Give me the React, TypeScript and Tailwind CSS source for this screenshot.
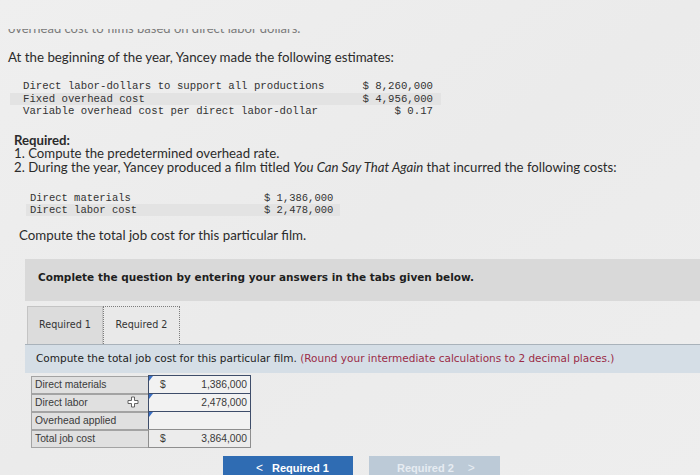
import React from "react";

const sans = { fontFamily: "Lato, 'Open Sans', sans-serif" };
const mono = { fontFamily: "'Liberation Mono', 'DejaVu Sans Mono', monospace" };
const tah = { fontFamily: "'DejaVu Sans', Verdana, sans-serif" };
const arial = { fontFamily: "'Liberation Sans', Arial, sans-serif" };

function PlusCursor() {
  return (
    <svg width="12" height="12" viewBox="0 0 12 12" className="absolute left-[127px] top-[396px]">
      <path d="M4.5 1 H7.5 V4.5 H11 V7.5 H7.5 V11 H4.5 V7.5 H1 V4.5 H4.5 Z" fill="#ffffff" stroke="#555" strokeWidth="0.9" />
    </svg>
  );
}

function Marker() {
  return <span className="absolute left-0 top-0 w-0 h-0 border-t-[5px] border-t-[#3a6fc4] border-r-[4px] border-r-transparent" />;
}

export default function App() {
  return (
    <div className="relative w-[700px] h-[475px] overflow-hidden bg-gradient-to-br from-[#efefef] via-[#ebebeb] to-[#eeeeee] text-[#2b2b2b]">
      {/* cut-off top line */}
      <div className="pt-[29px] pl-[8px] h-[35px] overflow-hidden">
        <div className="h-[6px] overflow-hidden">
          <div className="-mt-[8px] text-[13px] leading-[15px] text-[#7a7a7a]" style={sans}>
            overhead cost to films based on direct labor dollars.
          </div>
        </div>
      </div>

      <div className="mt-[14px] pl-[8px] text-[13.3px] leading-[16px]" style={sans}>
        At the beginning of the year, Yancey made the following estimates:
      </div>

      <div className="mt-[15px] ml-[10px] w-[431px] text-[10.7px] leading-[12.5px] text-[#333]" style={mono}>
        <div className="flex justify-between pl-[13px] pr-[8px]">
          <span>Direct labor-dollars to support all productions</span>
          <span>$ 8,260,000</span>
        </div>
        <div className="flex justify-between pl-[13px] pr-[8px] bg-[#e3e3e3]">
          <span>Fixed overhead cost</span>
          <span>$ 4,956,000</span>
        </div>
        <div className="flex justify-between pl-[13px] pr-[8px]">
          <span>Variable overhead cost per direct labor-dollar</span>
          <span>$ 0.17</span>
        </div>
      </div>

      <div className="mt-[16px] pl-[14px] text-[13.2px] leading-[13.5px]" style={sans}>
        <div className="font-bold">Required:</div>
        <div>1. Compute the predetermined overhead rate.</div>
        <div>
          2. During the year, Yancey produced a film titled <i>You Can Say That Again</i> that incurred the following costs:
        </div>
      </div>

      <div className="mt-[18px] ml-[26px] w-[314px] text-[10.5px] leading-[12px] text-[#333]" style={mono}>
        <div className="flex pl-[4px]">
          <span className="w-[234px]">Direct materials</span>
          <span>$ 1,386,000</span>
        </div>
        <div className="flex pl-[4px] bg-[#e3e3e3]">
          <span className="w-[234px]">Direct labor cost</span>
          <span>$ 2,478,000</span>
        </div>
      </div>

      <div className="mt-[11px] pl-[19px] text-[13.3px] leading-[16px]" style={sans}>
        Compute the total job cost for this particular film.
      </div>

      <div className="mt-[16px] ml-[25px] h-[42px] bg-[#d9d9d9] flex items-center pl-[13px] pb-[5px] text-[10.5px] font-bold text-[#1e1e1e]" style={tah}>
        Complete the question by entering your answers in the tabs given below.
      </div>

      <div className="mt-[5px] ml-[27px] flex h-[38px] text-[9.6px] text-[#333]" style={tah}>
        <div className="w-[76px] bg-[#dcdcdc] border border-[#c4c4c4] border-b-0 flex items-center justify-center">Required 1</div>
        <div className="w-[77px] bg-[#e9e9e9] border border-dotted border-[#7d7d7d] border-b-0 flex items-center justify-center">Required 2</div>
      </div>

      <div className="ml-[25px] h-[29px] bg-[#d5dee6] border-t border-[#a9b2ba] flex items-center pl-[11px] text-[10.5px] text-[#222]" style={tah}>
        Compute the total job cost for this particular film.&nbsp;<span className="text-[#9b2c47]">(Round your intermediate calculations to 2 decimal places.)</span>
      </div>

      <div className="mt-[3px] ml-[31px] w-[220px] text-[10.3px] text-[#3a3a3a]" style={arial}>
        {[
          { label: "Direct materials", dollar: true, value: "1,386,000", input: true },
          { label: "Direct labor", dollar: false, value: "2,478,000", input: true },
          { label: "Overhead applied", dollar: false, value: "", input: true },
          { label: "Total job cost", dollar: true, value: "3,864,000", input: false },
        ].map((r, i) => (
          <div key={i} className="flex h-[18px]">
            <div className="w-[118px] bg-[#e0e0e0] border border-[#a3a3a3] -mt-px first:mt-0 flex items-center pl-[3px]">{r.label}</div>
            <div
              className={
                "relative flex-1 -ml-px -mt-px flex items-center pl-[11px] pr-[3px] " +
                (r.input ? "bg-[#f2f2f2] border-[1.5px] border-[#3e4d6a]" : "bg-[#ececec] border border-[#8e8e8e]")
              }
            >
              {r.input && <Marker />}
              <span className="w-[10px]">{r.dollar ? "$" : ""}</span>
              <span className="flex-1 text-right">{r.value}</span>
            </div>
          </div>
        ))}
      </div>

      <PlusCursor />

      <div className="mt-[8px] flex text-[11px] font-bold" style={arial}>
        <div className="ml-[223px] w-[130px] h-[24px] bg-[#2f6cb3] text-white flex items-center pl-[33px]">
          <span className="mr-[9px] font-normal text-[12px]">&lt;</span>Required 1
        </div>
        <div className="ml-[16px] w-[131px] h-[24px] bg-[#bccad7] text-[#e6ecf2] flex items-center pl-[28px]">
          Required 2<span className="ml-[14px] font-normal text-[12px]">&gt;</span>
        </div>
      </div>
    </div>
  );
}
